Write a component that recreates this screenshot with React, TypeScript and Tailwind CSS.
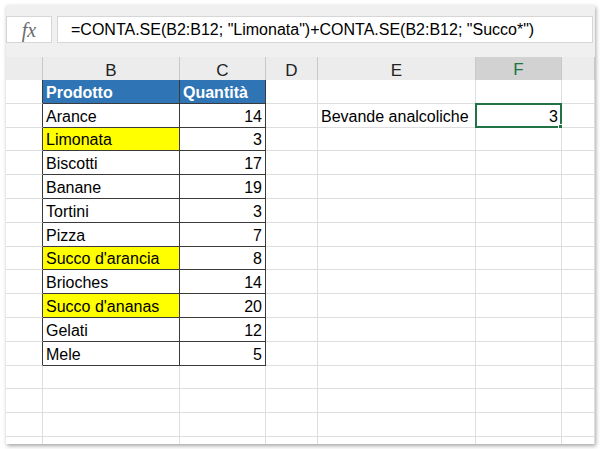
import React from 'react';

// Excel-like sheet: formula bar, column headers and a small product table
const COLS = ['', 'B', 'C', 'D', 'E', 'F', ''];

const ROWS: { b: string; c: string; yellow?: boolean }[] = [
  { b: 'Arance', c: '14' },
  { b: 'Limonata', c: '3', yellow: true },
  { b: 'Biscotti', c: '17' },
  { b: 'Banane', c: '19' },
  { b: 'Tortini', c: '3' },
  { b: 'Pizza', c: '7' },
  { b: "Succo d'arancia", c: '8', yellow: true },
  { b: 'Brioches', c: '14' },
  { b: "Succo d'ananas", c: '20', yellow: true },
  { b: 'Gelati', c: '12' },
  { b: 'Mele', c: '5' },
];

const GRID = 'grid grid-cols-[37px_137px_86px_52px_158px_86px_33px]';
const TOTAL_ROWS = 16;

function Cell({ r, c }: { r: number; c: number }) {
  const inTable = r <= 11;
  const rightDark = inTable && c <= 2;
  const bottomDark = inTable && (c === 1 || c === 2);
  const border = [
    'border-r border-b',
    rightDark ? 'border-r-[#3a3a3a]' : 'border-r-[#dedede]',
    bottomDark ? 'border-b-[#3a3a3a]' : 'border-b-[#dedede]',
  ].join(' ');

  let content: React.ReactNode = null;
  let bg = 'bg-white';
  let align = 'justify-start';

  if (r === 0 && c === 1) {
    bg = 'bg-[#2f75b5]';
    content = <span className="font-bold text-white">Prodotto</span>;
  } else if (r === 0 && c === 2) {
    bg = 'bg-[#2f75b5]';
    content = <span className="font-bold text-white">Quantità</span>;
  } else if (r >= 1 && r <= 11 && c === 1) {
    const row = ROWS[r - 1];
    if (row.yellow) bg = 'bg-[#ffff00]';
    content = row.b;
  } else if (r >= 1 && r <= 11 && c === 2) {
    align = 'justify-end';
    content = ROWS[r - 1].c;
  } else if (r === 1 && c === 4) {
    content = 'Bevande analcoliche';
  } else if (r === 1 && c === 5) {
    align = 'justify-end';
    content = '3';
  }

  return (
    <div
      className={`relative flex h-[23.8px] items-end whitespace-nowrap px-[3px] pb-[1px] leading-[18px] ${align} ${bg} ${border}`}
    >
      {content}
      {r === 1 && c === 5 && (
        <div className="absolute -left-[1px] -top-[1px] bottom-[-1px] right-[-1px] border-2 border-[#217346]">
          <div className="absolute -bottom-[4px] -right-[4px] h-[6px] w-[6px] border border-white bg-[#217346]" />
        </div>
      )}
    </div>
  );
}

export default function App() {
  return (
    <div className="h-[449px] w-[600px] overflow-hidden bg-white pl-[6px] pt-[5px]">
      <div
        className="flex h-[439px] w-[589px] flex-col overflow-hidden bg-[#f0f0f0] shadow-[1px_2px_4px_rgba(0,0,0,0.35)]"
        style={{ fontFamily: '"Liberation Sans", Arial, sans-serif' }}
      >
        {/* Formula bar */}
        <div className="h-[11px] shrink-0" />
        <div className="flex h-[27px] shrink-0 gap-[5px] pr-[2px]">
          <div className="flex w-[46px] items-center justify-center border border-[#d6d6d6] bg-white">
            <span
              className="text-[20px] italic text-[#6b6b6b]"
              style={{ fontFamily: '"Liberation Serif", "DejaVu Serif", serif' }}
            >
              fx
            </span>
          </div>
          <div className="flex flex-1 items-center border border-[#d6d6d6] bg-white pl-[13px] text-[16px] text-black">
            =CONTA.SE(B2:B12; "Limonata")+CONTA.SE(B2:B12; "Succo*")
          </div>
        </div>
        <div className="h-[14px] shrink-0" />

        {/* Column headers */}
        <div className={`${GRID} h-[23px] shrink-0`}>
          {COLS.map((col, i) => (
            <div
              key={i}
              className={
                i === 5
                  ? 'flex items-center justify-center border-b-2 border-r border-b-[#217346] border-r-[#c8c8c8] bg-[#d2d2d2] text-[17px] text-[#217346]'
                  : 'flex items-center justify-center border-b border-r border-[#c8c8c8] bg-[#ececec] text-[17px] text-[#222]'
              }
            >
              {col}
            </div>
          ))}
        </div>

        {/* Cells */}
        <div className={`${GRID} text-[16px] text-black`}>
          {Array.from({ length: TOTAL_ROWS }).map((_, r) =>
            COLS.map((_, c) => <Cell key={`${r}-${c}`} r={r} c={c} />)
          )}
        </div>
      </div>
    </div>
  );
}
